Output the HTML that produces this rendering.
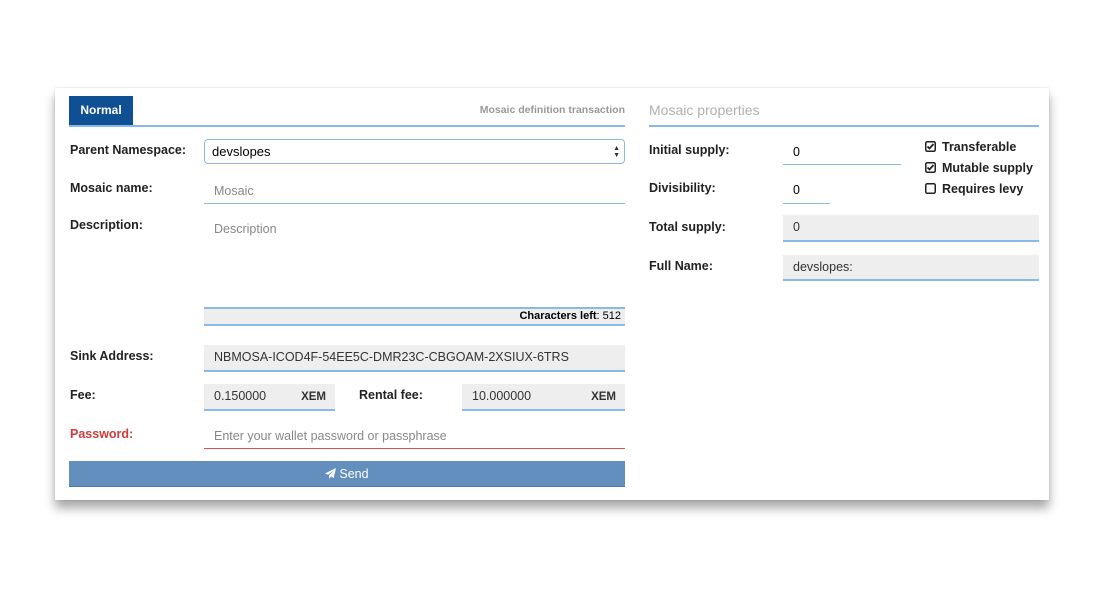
<!DOCTYPE html>
<html><head><style>
body{margin:0;width:1104px;height:589px;background:#fff;position:relative;font-family:"Liberation Sans",Arial,sans-serif;overflow:hidden}
.a{position:absolute}
.card{left:55px;top:88px;width:994px;height:412px;background:#fff;box-shadow:0 8px 10px rgba(0,0,0,.35),0 0 2px rgba(0,0,0,.15)}
.lbl{font-size:12.5px;font-weight:bold;color:#222}
.gray{background:#eee;border-bottom:2px solid #8ab8e8;box-sizing:border-box;font-size:12.5px;color:#333;padding-left:10px;line-height:25px}
.ul{border-bottom:1.5px solid #8ab8e8;box-sizing:border-box;font-size:12.5px;padding-left:10px;line-height:24px}
.ph{color:#888}
.xem{font-size:11.5px;font-weight:bold;color:#333;position:absolute;right:9px;top:1px}
.cb{font-size:12.5px;font-weight:bold;color:#222}
.cb svg{vertical-align:-1px;margin-right:6px}
</style></head><body>
<div class="a card"></div>
<div class="a" style="left:69px;top:96px;width:64px;height:29px;background:#0f4f94;color:#fff;font-size:12px;font-weight:bold;line-height:28px;text-align:center">Normal</div>
<div class="a" style="left:425px;width:200px;text-align:right;top:104px;font-size:10.5px;color:#999;font-weight:bold">Mosaic definition transaction</div>
<div class="a" style="left:69px;top:125px;width:556px;height:1.5px;background:#8ab8e8"></div>

<div class="a lbl" style="left:70px;top:143px">Parent Namespace:</div>
<div class="a" style="left:204px;top:139px;width:421px;height:25px;border:1px solid #8ab8e8;border-radius:4px;box-sizing:border-box;font-size:13px;line-height:23px;padding-left:7px">devslopes<span style="position:absolute;right:4px;font-size:7px;line-height:7px;top:5px;color:#333">▲<br>▼</span></div>

<div class="a lbl" style="left:70px;top:181px">Mosaic name:</div>
<div class="a ul ph" style="left:204px;top:179px;width:421px;height:25px">Mosaic</div>

<div class="a lbl" style="left:70px;top:218px">Description:</div>
<div class="a ph" style="left:214px;top:222px;font-size:12.5px">Description</div>
<div class="a" style="left:204px;top:307px;width:421px;height:1.5px;background:#8ab8e8"></div>
<div class="a" style="left:204px;top:309px;width:421px;height:17px;background:#eee;border-bottom:2px solid #8ab8e8;box-sizing:border-box;font-size:11px;text-align:right;padding-right:4px;line-height:15px"><b>Characters left</b>: 512</div>

<div class="a lbl" style="left:70px;top:349px">Sink Address:</div>
<div class="a gray" style="left:204px;top:345px;width:421px;height:27px">NBMOSA-ICOD4F-54EE5C-DMR23C-CBGOAM-2XSIUX-6TRS</div>

<div class="a lbl" style="left:70px;top:388px">Fee:</div>
<div class="a gray" style="left:204px;top:384px;width:131px;height:27px">0.150000<span class="xem">XEM</span></div>
<div class="a lbl" style="left:359px;top:388px">Rental fee:</div>
<div class="a gray" style="left:462px;top:384px;width:163px;height:27px">10.000000<span class="xem">XEM</span></div>

<div class="a lbl" style="left:70px;top:427px;color:#d23b3b">Password:</div>
<div class="a ul ph" style="left:204px;top:424px;width:421px;height:25px;border-bottom-color:#e05050">Enter your wallet password or passphrase</div>

<div class="a" style="left:69px;top:461px;width:556px;height:26px;background:#628fbd;border-bottom:1px solid #4a78a8;box-sizing:border-box;color:#fff;font-size:12.5px;text-align:center;line-height:26px"><svg width="11" height="11" viewBox="0 0 12 12" style="vertical-align:-1px;margin-right:3px"><path d="M12 0L0 6l3.5 1.3L10 2 4.5 8v4l2-2.8L9.5 11z" fill="#fff"/></svg>Send</div>

<div class="a" style="left:649px;top:102px;font-size:14px;color:#b0b0b0">Mosaic properties</div>
<div class="a" style="left:649px;top:125px;width:390px;height:1.5px;background:#8ab8e8"></div>

<div class="a lbl" style="left:649px;top:143px">Initial supply:</div>
<div class="a ul" style="left:783px;top:140px;width:118px;height:25px">0</div>
<div class="a lbl" style="left:649px;top:181px">Divisibility:</div>
<div class="a ul" style="left:783px;top:178px;width:47px;height:26px">0</div>
<div class="a lbl" style="left:649px;top:220px">Total supply:</div>
<div class="a gray" style="left:783px;top:215px;width:256px;height:27px">0</div>
<div class="a lbl" style="left:649px;top:259px">Full Name:</div>
<div class="a gray" style="left:783px;top:255px;width:256px;height:26px">devslopes:</div>

<div class="a cb" style="left:925px;top:140px"><svg width="11" height="11" viewBox="0 0 11 11"><rect x="0.75" y="0.75" width="9.5" height="9.5" rx="1.5" fill="none" stroke="#222" stroke-width="1.5"/><path d="M2.5 5.5l2 2 4-4.5" fill="none" stroke="#222" stroke-width="1.8"/></svg>Transferable</div>
<div class="a cb" style="left:925px;top:161px"><svg width="11" height="11" viewBox="0 0 11 11"><rect x="0.75" y="0.75" width="9.5" height="9.5" rx="1.5" fill="none" stroke="#222" stroke-width="1.5"/><path d="M2.5 5.5l2 2 4-4.5" fill="none" stroke="#222" stroke-width="1.8"/></svg>Mutable supply</div>
<div class="a cb" style="left:925px;top:182px"><svg width="11" height="11" viewBox="0 0 11 11"><rect x="0.75" y="0.75" width="9.5" height="9.5" rx="1.5" fill="none" stroke="#222" stroke-width="1.5"/></svg>Requires levy</div>
</body></html>
